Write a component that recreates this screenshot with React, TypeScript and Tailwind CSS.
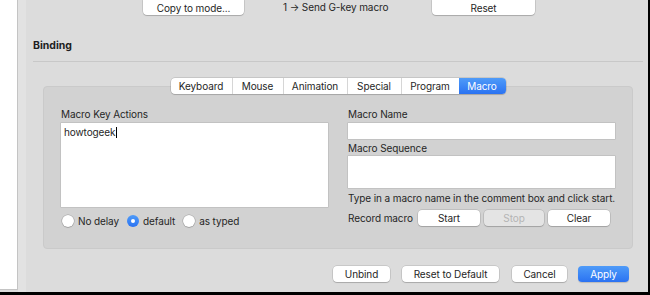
import React from 'react';

const font = { fontFamily: 'Inter, "Liberation Sans", Arial, sans-serif' };

function Button({ label, className = '', disabled = false }: { label: string; className?: string; disabled?: boolean }) {
  return (
    <div
      className={`flex h-[16px] items-center justify-center rounded-[4px] text-[10px] leading-none tracking-[-0.1px] shadow-[0_0_0_0.5px_rgba(0,0,0,0.18),0_1px_1px_rgba(0,0,0,0.15)] ${
        disabled ? 'bg-[#e4e4e4] text-[#b4b4b4]' : 'bg-white text-[#262626]'
      } ${className}`}
    >
      {label}
    </div>
  );
}

function Radio({ label, checked = false }: { label: string; checked?: boolean }) {
  return (
    <div className="flex items-center gap-[4px]">
      {checked ? (
        <div className="flex h-[12px] w-[12px] items-center justify-center rounded-full bg-gradient-to-b from-[#4f9bf8] to-[#2b72f2]">
          <div className="h-[4px] w-[4px] rounded-full bg-white" />
        </div>
      ) : (
        <div className="h-[12px] w-[12px] rounded-full bg-white shadow-[0_0_0_0.5px_rgba(0,0,0,0.25),0_1px_1px_rgba(0,0,0,0.12)]" />
      )}
      <span className="text-[10px] tracking-[-0.1px] text-[#262626]">{label}</span>
    </div>
  );
}

const tabs = [
  { name: 'Keyboard', w: 'w-[61px]' },
  { name: 'Mouse', w: 'w-[51px]' },
  { name: 'Animation', w: 'w-[64px]' },
  { name: 'Special', w: 'w-[54px]' },
  { name: 'Program', w: 'w-[58px]' },
  { name: 'Macro', w: 'w-[47px]' },
];

const label = 'h-[12px] text-[10px] leading-[12px] tracking-[-0.1px] text-[#262626]';

export default function App() {
  return (
    <div className="h-[295px] w-[650px] overflow-hidden bg-black" style={font}>
      <div className="flex h-[292px] w-[648px] bg-[#dcdcdc]">
        {/* sidebar */}
        <div className="h-[290px] w-[18px] border-r border-b border-[#c4c4c4] bg-white" />
        <div className="h-full w-[8px] bg-[#e2e2e2]" />

        {/* main */}
        <div className="flex flex-1 flex-col">
          <div className="-mt-[3px] flex h-[18px] items-center">
            <Button label="Copy to mode..." className="ml-[117px] h-[18px] w-[101px] pt-[3px]" />
            <span className="ml-[39px] w-[149px] pt-[3px] text-[10px] tracking-[-0.1px] text-[#262626]">1 → Send G-key macro</span>
            <Button label="Reset" className="h-[18px] w-[103px] pt-[3px]" />
          </div>

          <div className="mt-[24px] ml-[7px] text-[10.5px] leading-[14px] font-bold text-[#1e1e1e]">Binding</div>
          <div className="mt-[8px] ml-[7px] mr-[5px] h-px bg-[#c8c8c8]" />

          {/* tab bar + group */}
          <div className="mt-[16px] ml-[17px] flex w-[590px] flex-col">
            <div className="relative z-10 -mb-[8px] flex justify-center">
              <div className="flex h-[16px] overflow-hidden rounded-[4px] bg-white shadow-[0_0_0_0.5px_rgba(0,0,0,0.2),0_1px_1px_rgba(0,0,0,0.12)]">
                {tabs.map((t, i) => {
                  const active = t.name === 'Macro';
                  return (
                    <div
                      key={t.name}
                      className={`flex items-center justify-center text-[10px] leading-none tracking-[-0.1px] ${t.w} ${
                        active
                          ? 'bg-gradient-to-b from-[#4f9bf8] to-[#2b72f2] text-white'
                          : 'text-[#262626]'
                      } ${i > 0 && !active ? 'border-l border-[#d6d6d6]' : ''}`}
                    >
                      {t.name}
                    </div>
                  );
                })}
              </div>
            </div>

            <div className="flex h-[163px] rounded-[4px] border border-[#cacaca] bg-[#d2d2d2] pt-[21px] pl-[17px]">
              {/* left column */}
              <div className="flex w-[267px] flex-col">
                <div className={label}>Macro Key Actions</div>
                <div className="mt-[3px] h-[84px] bg-white px-[3px] pt-[2px] text-[10px] tracking-[-0.1px] text-[#262626] shadow-[0_0_0_0.5px_rgba(0,0,0,0.15)]">
                  howtogeek<span className="ml-px inline-block h-[11px] w-px translate-y-[2px] bg-black" />
                </div>
                <div className="mt-[7px] flex h-[14px] items-center gap-[8px] pl-px">
                  <Radio label="No delay" />
                  <Radio label="default" checked />
                  <Radio label="as typed" />
                </div>
              </div>

              {/* right column */}
              <div className="ml-[20px] flex w-[267px] flex-col">
                <div className={label}>Macro Name</div>
                <div className="mt-[3px] h-[16px] bg-white shadow-[0_0_0_0.5px_rgba(0,0,0,0.15)]" />
                <div className={`mt-[3px] ${label}`}>Macro Sequence</div>
                <div className="mt-[2px] h-[32px] bg-white shadow-[0_0_0_0.5px_rgba(0,0,0,0.15)]" />
                <div className={`mt-[4px] whitespace-nowrap ${label}`}>
                  Type in a macro name in the comment box and click start.
                </div>
                <div className="mt-[6px] flex h-[16px] items-center">
                  <span className="w-[70px] text-[10px] tracking-[-0.1px] text-[#262626]">Record macro</span>
                  <Button label="Start" className="w-[62px]" />
                  <Button label="Stop" disabled className="ml-[4px] w-[60px]" />
                  <Button label="Clear" className="ml-[4px] w-[62px]" />
                </div>
              </div>
            </div>
          </div>

          {/* bottom buttons */}
          <div className="mt-[17px] flex items-center">
            <Button label="Unbind" className="ml-[307px] w-[57px]" />
            <Button label="Reset to Default" className="ml-[12px] w-[97px]" />
            <Button label="Cancel" className="ml-[13px] w-[55px]" />
            <div className="ml-[11px] flex h-[16px] w-[51px] items-center justify-center rounded-[4px] bg-gradient-to-b from-[#4f9bf8] to-[#2b72f2] text-[10px] leading-none tracking-[-0.1px] text-white shadow-[0_1px_1px_rgba(0,0,0,0.15)]">
              Apply
            </div>
          </div>
        </div>
      </div>
    </div>
  );
}
